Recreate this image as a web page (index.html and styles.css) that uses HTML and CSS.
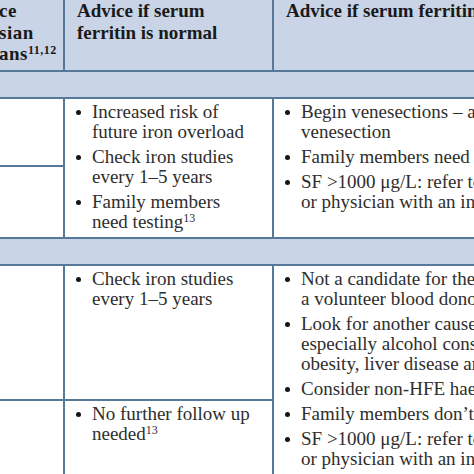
FILE: index.html
```html
<!DOCTYPE html>
<html lang="en">
<head>
<meta charset="utf-8">
<title>Serum ferritin advice</title>
<link rel="stylesheet" href="styles.css">
</head>
<body>
<div class="table">
  <div class="cell head first"><span class="line">ce</span><span class="line">sian</span><span class="line">ans<sup>11,12</sup></span></div>
  <div class="cell head">Advice if serum<br>ferritin is normal</div>
  <div class="cell head nowrap">Advice if serum ferritin is elevated</div>

  <div class="cell band"></div>

  <div class="cell"></div>
  <div class="cell span2">
    <ul class="bullets">
      <li><span>Increased risk of<br>future iron overload</span></li>
      <li><span>Check iron studies<br>every 1–5 years</span></li>
      <li><span>Family members<br>need testing<sup>13</sup></span></li>
    </ul>
  </div>
  <div class="cell span2 nowrap">
    <ul class="bullets">
      <li><span>Begin venesections – aim for one<br>venesection</span></li>
      <li><span>Family members need testing</span></li>
      <li><span>SF &gt;1000 μg/L: refer to a specialist<br>or physician with an interest</span></li>
    </ul>
  </div>
  <div class="cell"></div>

  <div class="cell band"></div>

  <div class="cell"></div>
  <div class="cell">
    <ul class="bullets">
      <li><span>Check iron studies<br>every 1–5 years</span></li>
    </ul>
  </div>
  <div class="cell span2 nowrap">
    <ul class="bullets">
      <li><span>Not a candidate for therapeutic<br>a volunteer blood donor</span></li>
      <li><span>Look for another cause of raised SF,<br>especially alcohol consumption,<br>obesity, liver disease and</span></li>
      <li><span>Consider non-HFE haemochromatosis</span></li>
      <li><span>Family members don’t need testing</span></li>
      <li><span>SF &gt;1000 μg/L: refer to a specialist<br>or physician with an interest</span></li>
    </ul>
  </div>
  <div class="cell"></div>
  <div class="cell">
    <ul class="bullets">
      <li><span>No further follow up<br>needed<sup>13</sup></span></li>
    </ul>
  </div>
</div>
</body>
</html>
```
FILE: styles.css
```css
html, body {
  margin: 0;
  padding: 0;
  background: #ffffff;
}
body {
  width: 474px;
  height: 474px;
  overflow: hidden;
  font-family: "Liberation Serif", "Times New Roman", serif;
  color: #2e2e2e;
}
.table {
  display: grid;
  width: 700px;
  grid-template-columns: 63px 207px 426px;
  grid-template-rows: 70px 25px 66px 70px 25px 133px 80px;
  gap: 2px;
  background: #56799a;
}
.cell {
  background: #ffffff;
  overflow: hidden;
}
.span2 {
  grid-row: span 2;
}
.nowrap {
  white-space: nowrap;
}
.head {
  background: #c9d4e6;
  font-weight: bold;
  font-size: 19px;
  line-height: 21.5px;
  color: #1a1a1a;
  padding: 0 0 0 12px;
}
.head.first {
  padding-left: 0;
  display: flex;
  flex-direction: column;
  align-items: flex-start;
}
.head.first .line {
  margin-left: -1px;
  letter-spacing: 0.5px;
}
.band {
  grid-column: 1 / -1;
  background: #c9d4e6;
}
sup {
  font-size: 12px;
  line-height: 12px;
  vertical-align: 6px;
  font-weight: normal;
}
.head sup {
  font-weight: bold;
}
.bullets {
  list-style: none;
  margin: 0;
  padding: 3px 0 0 11px;
  display: flex;
  flex-direction: column;
  gap: 5px;
  font-size: 19px;
  line-height: 20px;
}
.bullets li {
  display: grid;
  grid-template-columns: 16px auto;
  align-items: start;
}
.bullets li::before {
  content: "";
  width: 5px;
  height: 5px;
  margin-top: 8px;
  border-radius: 50%;
  background: #151515;
}
```
